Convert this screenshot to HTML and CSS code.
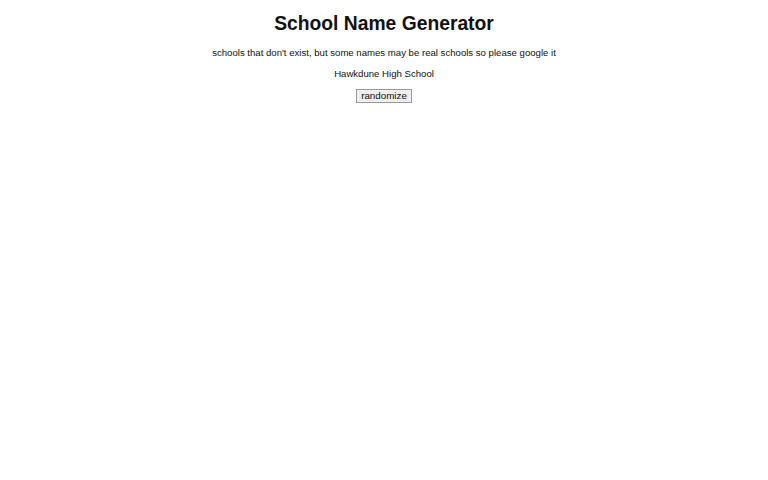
FILE: index.html
```html
<!DOCTYPE html>
<html lang="en">
<head>
    <meta charset="UTF-8">
    <meta name="viewport" content="width=device-width, initial-scale=1.0">
    <title>School Name Generator</title>
    <link rel="stylesheet" href="styles.css">
</head>
<body>
    <div class="content">
        <h1>School Name Generator</h1>
        <p class="subtitle">schools that don't exist, but some names may be real schools so please google it</p>
        <p id="schoolName" class="schoolName">Hawkdune High School</p>
        <button id="randomize" class="randomize">randomize</button>
    </div>
</body>
</html>
```

FILE: styles.css
```css
* {
  box-sizing: border-box;
}

body {
  margin: 0;
  background-color: #FFFFFF;
  color: #111111;
  font-family: "Liberation Sans", Arial, sans-serif;
}

.content {
  display: flex;
  flex-direction: column;
  align-items: center;
  text-align: center;
  padding-top: 12px;
}

h1 {
  font-size: 19.3px;
  line-height: 23px;
  margin: 0 0 12px 0;
}

p {
  font-size: 9.6px;
  line-height: 12px;
  margin: 0 0 9px 0;
}

.randomize {
  font-family: "Liberation Sans", Arial, sans-serif;
  font-size: 9.8px;
  line-height: 12px;
  padding: 0 4px;
  background-color: #EFEFEF;
  border: 1px solid #999999;
  border-radius: 0;
  color: #111111;
}
```
